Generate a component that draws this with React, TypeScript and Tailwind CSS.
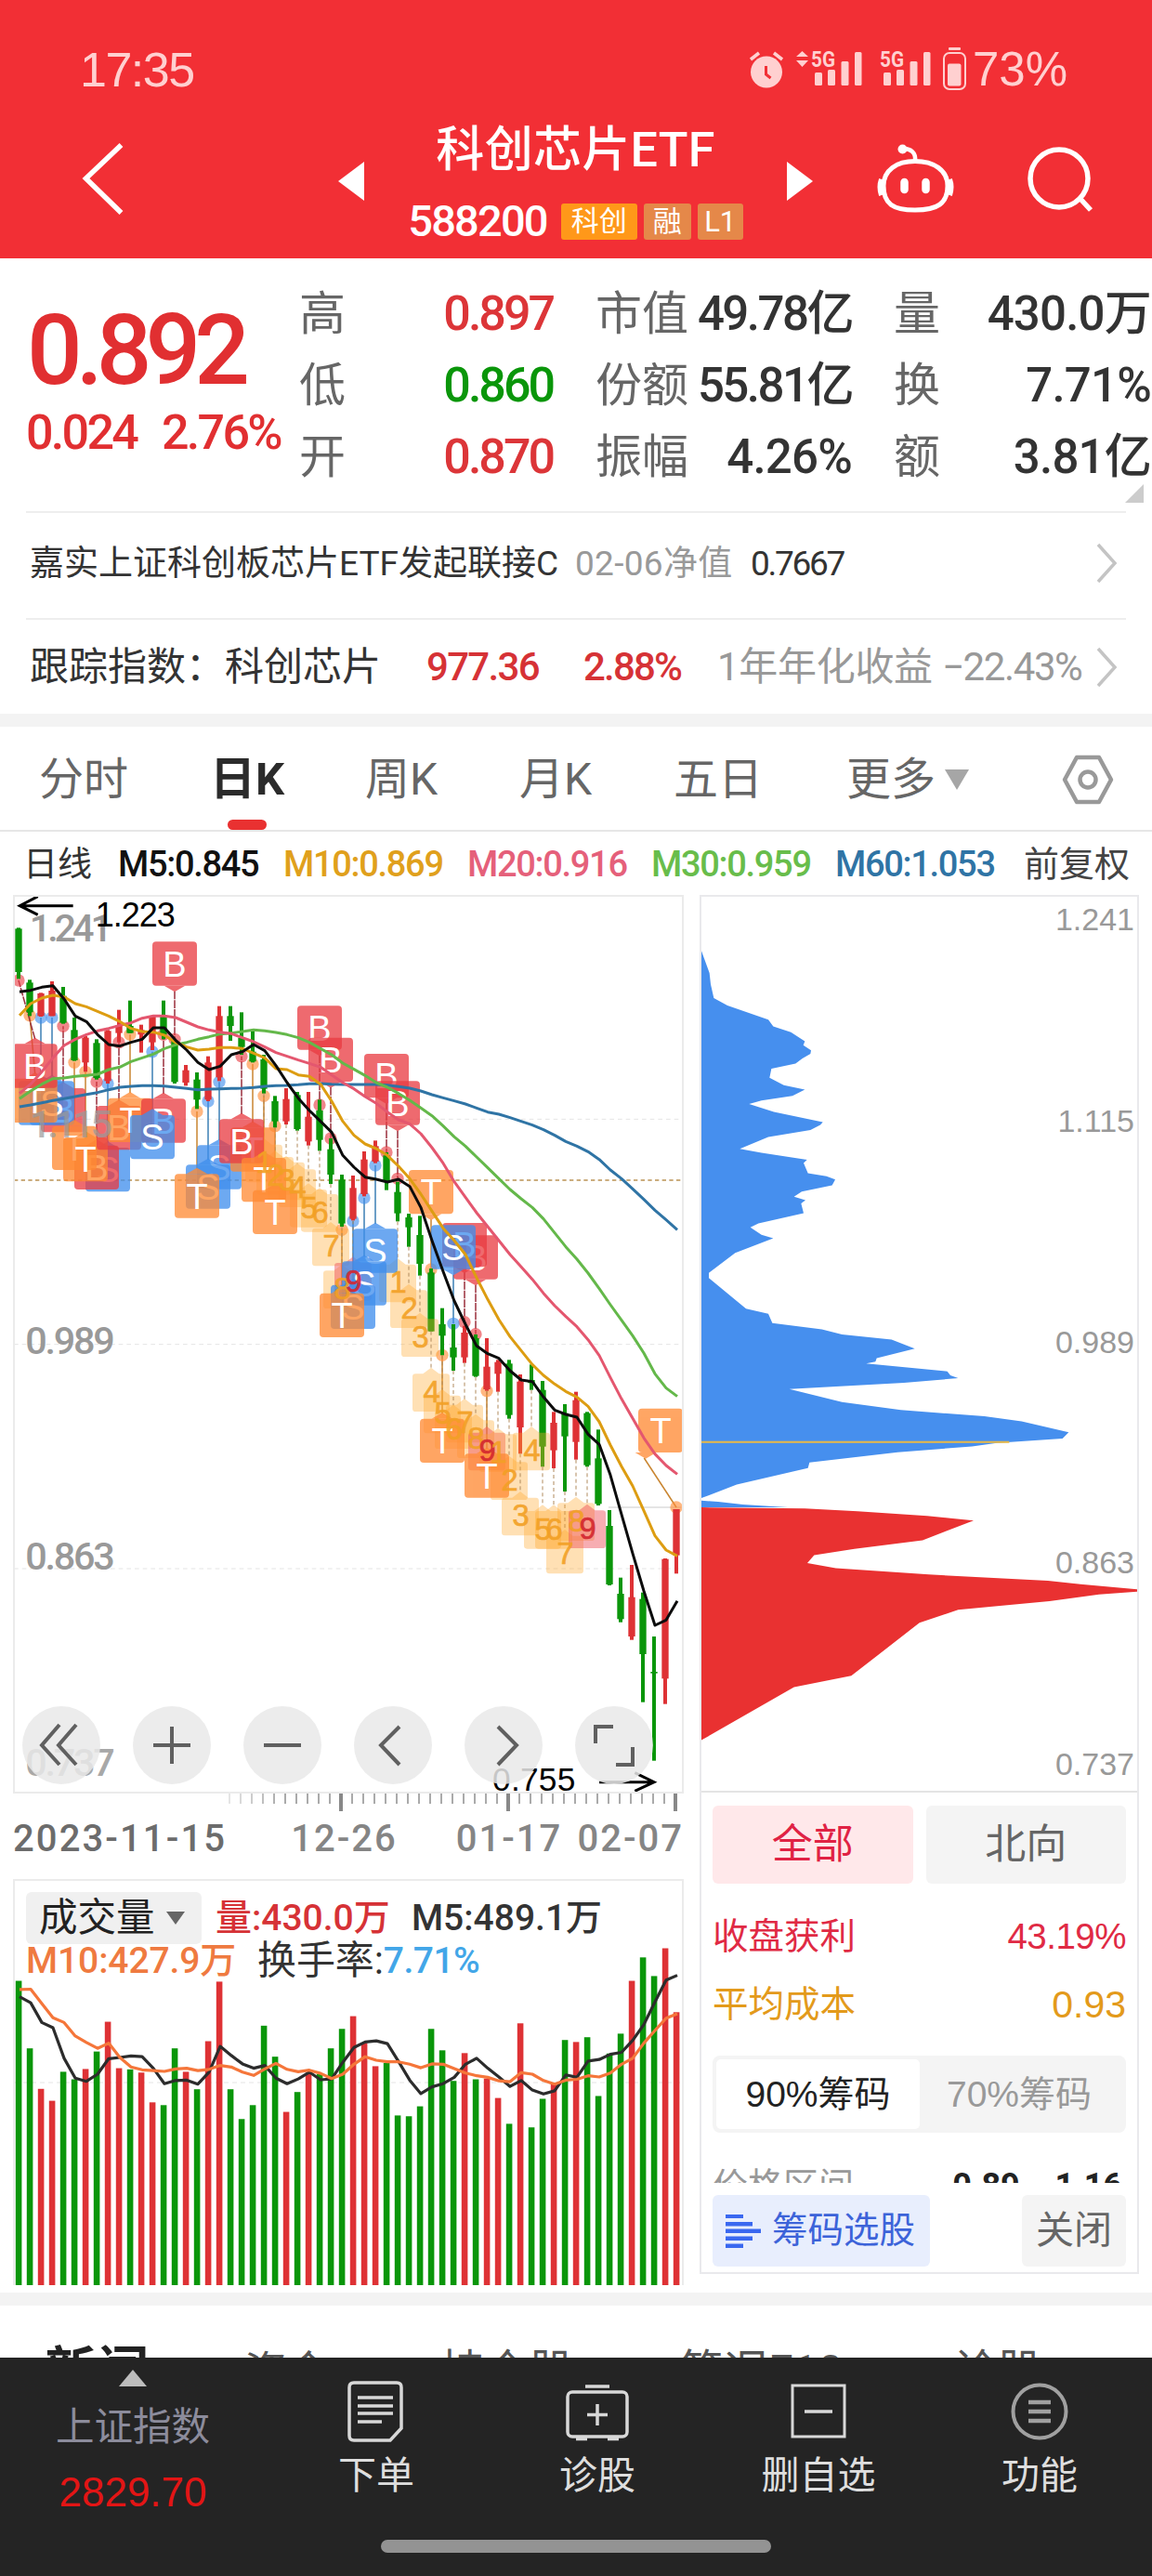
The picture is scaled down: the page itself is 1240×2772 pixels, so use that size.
import React from "react";

// Chart space: 3 units per pixel, candles are 36 units apart
const STEP = 36;
const FIRST_X = 60;
const cx = (i: number) => FIRST_X + i * STEP;

const UP = "#de3235";
const DOWN = "#0a960a";

type Candle = [string, number, number, number, number];

// direction, high, low, body top, body bottom
const candles: Candle[] = [
  ["d", 145, 310, 148, 288], ["d", 313, 430, 322, 418], ["u", 355, 432, 357, 430], ["u", 318, 430, 348, 430],
  ["d", 336, 455, 365, 452], ["d", 435, 575, 475, 573], ["u", 495, 610, 500, 580], ["d", 505, 635, 517, 630],
  ["u", 475, 648, 478, 640], ["u", 410, 515, 460, 485], ["d", 380, 485, 462, 485], ["u", 458, 548, 475, 490],
  ["u", 430, 540, 432, 515], ["d", 380, 505, 430, 490], ["d", 505, 648, 510, 643], ["u", 588, 655, 605, 645],
  ["d", 612, 730, 635, 700], ["u", 560, 705, 580, 700], ["u", 398, 640, 430, 628], ["d", 398, 510, 430, 462],
  ["d", 418, 555, 500, 530], ["d", 478, 580, 545, 577], ["d", 555, 680, 570, 665], ["d", 688, 790, 705, 770],
  ["u", 663, 780, 698, 770], ["d", 675, 800, 685, 795], ["u", 675, 848, 755, 835], ["d", 700, 865, 735, 830],
  ["d", 825, 972, 860, 942], ["d", 942, 1110, 958, 1100], ["u", 945, 1090, 985, 1085], ["u", 867, 1012, 893, 1005],
  ["u", 832, 905, 850, 900], ["d", 870, 992, 880, 965], ["d", 965, 1093, 998, 1067], ["d", 1068, 1175, 1080, 1112],
  ["d", 1075, 1268, 1137, 1230], ["d", 1245, 1448, 1258, 1448], ["d", 1373, 1525, 1425, 1462], ["d", 1425, 1575, 1500, 1532],
  ["u", 1430, 1550, 1452, 1532], ["d", 1458, 1595, 1470, 1592], ["u", 1470, 1640, 1562, 1635], ["u", 1540, 1643, 1547, 1585],
  ["d", 1540, 1730, 1552, 1718], ["u", 1587, 1843, 1610, 1758], ["d", 1555, 1637, 1605, 1615], ["d", 1608, 1885, 1637, 1820],
  ["u", 1708, 1890, 1743, 1832], ["d", 1683, 1965, 1712, 1787], ["u", 1643, 1862, 1670, 1805], ["d", 1708, 1885, 1712, 1880],
  ["d", 1765, 2010, 1858, 2005], ["d", 2025, 2268, 2076, 2265], ["d", 2243, 2387, 2295, 2377], ["u", 2202, 2444, 2306, 2433],
  ["d", 2291, 2645, 2312, 2490], ["d", 2433, 2834, 2547, 2552], ["u", 2181, 2651, 2183, 2569], ["u", 2022, 2230, 2022, 2171],
];

const averages = [
  { color: "#2f74a5", values: [723, 717, 710, 703, 697, 690, 683, 677, 668, 660, 657, 655, 655, 656, 660, 664, 668, 666, 665, 664, 663, 661, 657, 655, 654, 652, 649, 648, 650, 651, 651, 651, 651, 653, 658, 663, 672, 684, 694, 704, 714, 727, 740, 747, 758, 770, 782, 797, 815, 835, 850, 868, 893, 927, 955, 988, 1022, 1057, 1088, 1120] },
  { color: "#64b84a", values: [697, 672, 650, 632, 630, 625, 622, 618, 603, 595, 577, 565, 553, 535, 523, 515, 505, 497, 488, 485, 480, 475, 478, 483, 490, 500, 515, 535, 555, 582, 602, 622, 645, 660, 680, 702, 727, 752, 785, 820, 850, 885, 920, 955, 990, 1020, 1048, 1085, 1130, 1175, 1215, 1260, 1310, 1362, 1412, 1462, 1518, 1585, 1631, 1658] },
  { color: "#e4576f", values: [680, 650, 610, 565, 525, 505, 490, 478, 470, 460, 452, 437, 430, 430, 435, 450, 465, 475, 482, 487, 500, 513, 530, 548, 560, 572, 583, 595, 620, 645, 665, 690, 712, 740, 765, 778, 810, 855, 905, 965, 1015, 1065, 1110, 1155, 1200, 1240, 1280, 1325, 1365, 1400, 1433, 1475, 1526, 1597, 1666, 1729, 1792, 1844, 1881, 1909] },
  { color: "#dd9d12", values: [428, 390, 372, 363, 368, 390, 400, 415, 430, 448, 470, 480, 482, 492, 515, 530, 540, 537, 532, 532, 535, 550, 565, 600, 603, 620, 625, 650, 705, 770, 815, 843, 858, 880, 915, 955, 1005, 1060, 1115, 1155, 1200, 1275, 1345, 1410, 1465, 1510, 1555, 1590, 1618, 1642, 1660, 1690, 1740, 1815, 1884, 1947, 2027, 2108, 2154, 2173] },
  { color: "#0c0c0c", values: [352, 347, 337, 332, 375, 430, 448, 490, 522, 527, 515, 505, 468, 468, 508, 540, 580, 603, 592, 555, 545, 522, 542, 590, 645, 695, 735, 770, 805, 880, 918, 950, 957, 966, 957, 980, 1048, 1155, 1255, 1350, 1425, 1495, 1520, 1535, 1575, 1605, 1610, 1660, 1702, 1716, 1725, 1780, 1813, 1912, 2039, 2165, 2286, 2397, 2380, 2318] },
];

type Mark = { k: "B" | "S" | "T"; i: number; top: number; dot: number; x?: number; down?: boolean };

const marks: Mark[] = [
  { k: "S", i: 2, top: 640, dot: 435 },
  { k: "B", i: 4, top: 663, dot: 463 },
  { k: "S", i: 3, top: 640, dot: 435 },
  { k: "T", i: 1, top: 632, dot: 428, x: 113 },
  { k: "B", i: 0, top: 520, dot: 315, x: 113 },
  { k: "S", i: 8, top: 855, dot: 648 },
  { k: "B", i: 7, top: 848, dot: 642 },
  { k: "T", i: 5, top: 785, dot: 580 },
  { k: "T", i: 6, top: 822, dot: 610 },
  { k: "B", i: 9, top: 720, dot: 515 },
  { k: "T", i: 10, top: 695, dot: 490 },
  { k: "B", i: 13, top: 697, dot: 490 },
  { k: "S", i: 12, top: 750, dot: 545 },
  { k: "B", i: 14, top: 190, dot: 505, down: true },
  { k: "S", i: 18, top: 847, dot: 643 },
  { k: "S", i: 17, top: 910, dot: 705 },
  { k: "T", i: 16, top: 940, dot: 738 },
  { k: "T", i: 21, top: 790, dot: 585 },
  { k: "B", i: 20, top: 763, dot: 560 },
  { k: "T", i: 22, top: 888, dot: 688 },
  { k: "T", i: 23, top: 992, dot: 785 },
  { k: "B", i: 27, top: 397, dot: 717, down: true },
  { k: "B", i: 28, top: 500, dot: 825, down: true },
  { k: "B", i: 33, top: 552, dot: 870, down: true },
  { k: "B", i: 34, top: 640, dot: 955, down: true },
  { k: "S", i: 32, top: 1117, dot: 912 },
  { k: "S", i: 31, top: 1222, dot: 1017 },
  { k: "S", i: 30, top: 1298, dot: 1092 },
  { k: "T", i: 29, top: 1325, dot: 1120 },
  { k: "T", i: 37, top: 927, dot: 1248, down: true },
  { k: "B", i: 41, top: 1138, dot: 1457, down: true },
  { k: "B", i: 40, top: 1098, dot: 1418, down: true },
  { k: "S", i: 39, top: 1105, dot: 1423, down: true },
  { k: "T", i: 38, top: 1730, dot: 1525 },
  { k: "T", i: 42, top: 1843, dot: 1640 },
  { k: "T", i: 59, top: 1697, dot: 2016, x: 2133, down: true },
];

const MARK_FILL = { B: "#e93c42", S: "#3f8eed", T: "#ff8a33" };
const MARK_LINE = { B: "#9a2f3c", S: "#3b7fb4", T: "#c98530" };

// nine-turn counters: [candle, number, centre]
const counts: [number, number, number][] = [
  [22, 1, 905], [23, 2, 945], [24, 3, 962], [25, 4, 985], [26, 5, 1050], [27, 6, 1065], [28, 7, 1175], [29, 8, 1312], [30, 9, 1287],
  [34, 1, 1292], [35, 2, 1375], [36, 3, 1468], [37, 4, 1645], [38, 5, 1715], [39, 6, 1765], [40, 7, 1745], [41, 8, 1795], [42, 9, 1835],
  [43, 1, 1840], [44, 2, 1930], [45, 3, 2045], [46, 4, 1835], [47, 5, 2088], [48, 6, 2088], [49, 7, 2168], [50, 8, 2062], [51, 9, 2086],
];

const MarkLine = ({ m }: { m: Mark }) => {
  const x = m.x ?? cx(m.i);
  const last = m.i === 59;
  return (
    <g>
      <line x1={last ? 2080 : x} y1={m.down ? m.top + 160 : m.top - 16} x2={cx(m.i)} y2={m.dot} stroke={MARK_LINE[m.k]} strokeWidth="4.5" strokeDasharray={m.k === "B" ? "26 3" : undefined} />
      <circle cx={cx(m.i)} cy={m.dot} r="20" fill={MARK_FILL[m.k]} opacity="0.62" />
    </g>
  );
};

const MarkBox = ({ m }: { m: Mark }) => {
  const x = m.x ?? cx(m.i);
  const tipX = m.i === 59 ? 2085 : x;
  const tip = m.down
    ? `M${tipX - 34} ${m.top + 142} h68 l-34 20 z`
    : `M${tipX - 34} ${m.top} h68 l-34 -20 z`;
  return (
    <g>
      <g fill={MARK_FILL[m.k]} opacity="0.76">
        <rect x={x - 72} y={m.top} width="144" height="142" rx="12" />
        <path d={tip} />
      </g>
      <text x={x} y={m.top + 112} textAnchor="middle" fontSize="114" fill="#fff">{m.k}</text>
    </g>
  );
};

const polyline = (values: number[]) => values.map((v, i) => `${i ? "L" : "M"}${cx(i) + 3} ${v}`).join(" ");

function KLineChart() {
  return (
    <svg viewBox="48 45 2154 2889" className="block h-[963px] w-[718px]" fontFamily="Liberation Sans, Arial, sans-serif">
      {[763, 1490, 2214].map((y) => (
        <line key={y} x1="45" x2="2205" y1={y} y2={y} stroke="#e4e4e4" strokeWidth="3" strokeDasharray="14 12" />
      ))}
      <line x1="1965" x2="2200" y1="2016" y2="2016" stroke="#ddd" strokeWidth="4" />
      <line x1="45" x2="2205" y1="960" y2="960" stroke="#bb9254" strokeWidth="5" strokeDasharray="13 10" />

      {marks.map((m, i) => <MarkLine key={i} m={m} />)}

      {candles.map(([dir, high, low, top, bottom], i) => (
        <g key={i} fill={dir === "u" ? UP : DOWN}>
          <rect x={cx(i) - 6} y={high} width="12" height={low - high} />
          <rect x={cx(i) - 11} y={top} width="22" height={bottom - top} />
        </g>
      ))}

      {counts.map(([i, n, y]) => (
        <g key={i}>
          <line x1={cx(i)} x2={cx(i)} y1={candles[i][2]} y2={y - 78} stroke="#b08a5c" strokeWidth="3" strokeDasharray="12 9" />
          <path
            d={`M${cx(i) - 50} ${y - 60} h24 l26 -20 l26 20 h24 q10 0 10 10 v102 q0 10 -10 10 h-100 q-10 0 -10 -10 v-102 q0 -10 10 -10 z`}
            fill={n === 9 ? "#ee4a55" : "#ffa930"}
            opacity={n === 9 ? 0.45 : 0.36}
          />
        </g>
      ))}
      {marks.map((m, i) => <MarkBox key={i} m={m} />)}
      {counts.map(([i, n, y]) => (
        <text key={i} x={cx(i) + 2} y={y + 32} textAnchor="middle" fontSize="98" fill={n === 9 ? "#d3262f" : "#f2a025"} stroke={n === 9 ? "#d3262f" : "#f2a025"} strokeWidth="2" opacity="0.9">
          {n}
        </text>
      ))}

      <g fill="none" strokeWidth="9" strokeLinejoin="round">
        {averages.map((a) => <path key={a.color} d={polyline(a.values)} stroke={a.color} />)}
      </g>

      {/* axis labels */}
      <g fontFamily="Roboto, sans-serif" fontSize="124" fill="#999" fontWeight="500">
        <text x="95" y="188" textLength="268">1.241</text>
        <text x="95" y="822" textLength="268" opacity="0.7">1.115</text>
        <text x="82" y="1520" textLength="289">0.989</text>
        <text x="82" y="2218" textLength="289">0.863</text>
        <text x="82" y="2883" textLength="289" opacity="0.85">0.737</text>
      </g>

      {/* period high and low */}
      <g fill="none" stroke="#000" strokeWidth="9">
        <path d="M236 74 H64 M122 44 L64 74 L122 103" />
        <path d="M1935 2903 H2112 M2050 2873 L2112 2903 L2050 2932" />
      </g>
      <text x="308" y="142" fontSize="108" textLength="258">1.223</text>
      <text x="1590" y="2930" fontSize="106" textLength="268">0.755</text>
    </svg>
  );
}

const volumes: [string, number][] = [
  ["d", 775], ["d", 945], ["u", 1047], ["u", 1077], ["d", 1004], ["d", 1023], ["u", 997], ["d", 953], ["u", 878], ["u", 995],
  ["d", 998], ["u", 1006], ["u", 1081], ["d", 1088], ["d", 945], ["u", 1004], ["d", 1048], ["u", 927], ["u", 777], ["d", 1048],
  ["d", 1123], ["d", 1088], ["d", 888], ["d", 966], ["u", 1105], ["d", 1055], ["u", 1007], ["d", 1010], ["d", 945], ["d", 896],
  ["u", 864], ["u", 932], ["u", 990], ["d", 982], ["d", 1114], ["d", 1116], ["d", 1091], ["d", 896], ["d", 950], ["d", 1027],
  ["u", 957], ["d", 1023], ["u", 1021], ["u", 1070], ["d", 1135], ["u", 882], ["d", 1144], ["d", 1072], ["u", 1034], ["d", 924],
  ["u", 929], ["d", 917], ["d", 1065], ["d", 958], ["d", 908], ["u", 775], ["d", 716], ["d", 763], ["u", 693], ["u", 854],
];
const volumeM5 = [815, 830, 880, 893, 970, 1020, 1028, 1010, 971, 968, 964, 966, 995, 1034, 1026, 1025, 1035, 1005, 940, 963, 984, 995, 988, 1020, 1034, 1022, 1005, 1024, 1022, 980, 943, 929, 926, 933, 978, 1025, 1059, 1042, 1034, 1018, 985, 970, 995, 1017, 1041, 1026, 1050, 1060, 1052, 1012, 1018, 977, 973, 960, 955, 925, 885, 828, 773, 761];
const volumeM10 = [797, 796, 832, 868, 880, 914, 930, 945, 932, 968, 992, 999, 1001, 1003, 997, 995, 1001, 998, 988, 992, 1005, 1013, 997, 983, 998, 1004, 1000, 1008, 1021, 1010, 985, 966, 975, 979, 979, 985, 994, 984, 985, 996, 1007, 1014, 1018, 1027, 1029, 1006, 1010, 1026, 1035, 1025, 1023, 1014, 1017, 1007, 985, 970, 932, 900, 869, 858];

const volX = (i: number) => 4 + i * 12;
const volY = (v: number) => (v - 521) / 2.34 - 1;
const volPath = (values: number[]) => values.map((v, i) => `${i ? "L" : "M"}${volX(i) + 1} ${volY(v).toFixed(1)}`).join(" ");

function VolumeChart() {
  return (
    <svg viewBox="0 0 718 435" className="absolute inset-0 h-[435px] w-[718px]">
      <line x1="0" x2="718" y1="217" y2="217" stroke="#e4e4e4" strokeDasharray="5 4" />
      {volumes.map(([dir, v], i) => (
        <rect key={i} x={volX(i) - 3.2} y={volY(v)} width="6.6" height={435 - volY(v)} fill={dir === "u" ? UP : DOWN} />
      ))}
      <g fill="none" strokeWidth="3.2" strokeLinejoin="round">
        <path d={volPath(volumeM5)} stroke="#2c2c2c" />
        <path d={volPath(volumeM10)} stroke="#f5763a" />
      </g>
    </svg>
  );
}

function ChipChart() {
  return (
    <svg viewBox="46 24 1407 1571" preserveAspectRatio="none" className="block h-[962px] w-[469px]">
      <polygon
        fill="#468fee"
        points="40,110 72,158 76,178 86,202 130,215 262,240 278,252 335,262 380,278 375,285 400,294 398,300 372,308 350,317 272,326 266,342 312,355 380,363 340,374 240,382 200,388 280,402 438,420 430,425 398,434 262,446 170,467 240,474 387,486 376,492 390,510 450,515 478,521 468,531 370,542 345,551 382,557 368,563 376,580 230,598 204,605 240,618 278,624 155,650 70,685 70,694 190,748 262,757 275,773 435,784 500,793 660,802 735,818 612,835 608,841 578,844 840,858 850,865 875,870 700,878 330,889 500,912 690,926 960,937 1080,946 1232,965 1212,976 1000,984 920,990 680,1000 395,1018 390,1028 160,1057 40,1082"
      />
      <polygon fill="#468fee" points="40,1085 100,1087 180,1092 325,1097 40,1097" />
      <polygon
        fill="#e93131"
        points="40,1097 380,1099 550,1104 775,1112 850,1116 925,1120 760,1155 540,1170 410,1181 388,1195 480,1204 780,1215 1165,1226 1270,1232 1455,1241 1455,1245 1330,1250 1170,1262 970,1272 875,1277 750,1300 530,1393 345,1413 40,1508"
      />
      <rect x="40" y="980.5" width="1000" height="3.4" fill="#e5b84a" />
    </svg>
  );
}

const Chevron = () => (
  <svg viewBox="0 0 24 44" className="h-[44px] w-[24px] shrink-0" fill="none" stroke="#c4c4c4" strokeWidth="3.5">
    <path d="M3 2 L21 22 L3 42" />
  </svg>
);

const StatusIcons = () => (
  <svg viewBox="800 40 244 60" className="h-[60px] w-[244px]" fill="#ffd0d0">
    <circle cx="825" cy="77.500" r="17" />
    <path d="M808 64 l9 -7 M842 64 l-9 -7" stroke="#ffd0d0" strokeWidth="3.500" />
    <path d="M824.500 71 v9 l5 4" fill="none" stroke="#f22f35" strokeWidth="3" />
    <path d="M857 61 l6.500 -6 l6.500 6z M857 65 h13 l-6.500 7z" />
    {[0, 74].map((dx) => (
      <g key={dx} transform={`translate(${dx} 0)`}>
        <text x="873" y="72" fontFamily="Roboto, sans-serif" fontWeight="700" fontSize="24" textLength="26" lengthAdjust="spacingAndGlyphs">5G</text>
        <rect x="877" y="78" width="8" height="14" rx="1.500" />
        <rect x="891" y="75" width="8" height="17" rx="1.500" />
        <rect x="905.500" y="66" width="8" height="26" rx="1.500" />
        <rect x="920" y="56" width="7.500" height="36" rx="1.500" />
      </g>
    ))}
    <rect x="1021" y="51" width="13" height="3" rx="1" />
    <rect x="1016" y="57" width="23" height="39" rx="6" fill="none" stroke="#ffd0d0" strokeWidth="2" />
    <rect x="1020" y="68.500" width="14.500" height="24" rx="2" />
  </svg>
);

const Header = () => (
  <header className="h-[278px] bg-[#f22f35] text-white">
    <div className="flex h-[100px] items-end justify-between pr-[91px] pl-[86px] text-[#ffd0d0]">
      <span className="font-['Liberation_Sans',sans-serif] text-[52px] leading-[50px] tracking-[-1.5px]">17:35</span>
      <div className="flex items-end">
        <StatusIcons />
        <span className="pl-[3px] font-['Liberation_Sans',sans-serif] text-[51px] leading-[50px]">73%</span>
      </div>
    </div>
    <div className="flex h-[178px] pt-[31px]">
      <svg viewBox="86 150 50 84" className="mt-[19px] ml-[86px] h-[84px] w-[50px]" fill="none" stroke="#fff" strokeWidth="5.500">
        <path d="M130.500 156 L92.500 192 L130.500 229" />
      </svg>
      <svg viewBox="0 0 28 42" className="mt-[43px] ml-[228px] h-[42px] w-[28px]" fill="#fff"><path d="M28 0 V42 L0 21z" /></svg>
      <div className="flex w-[455px] flex-col items-center">
        <h1 className="text-[52px] leading-[62px] font-medium tracking-[0.3px]">科创芯片ETF</h1>
        <div className="mt-[24px] flex h-[42px] items-center gap-[7px]">
          <span className="mr-[8px] text-[47px] leading-[42px] font-medium tracking-[-1.8px]">588200</span>
          <span className="flex h-[39px] w-[82px] items-center justify-center rounded-[3px] bg-[#ff9819] text-[30px] leading-none">科创</span>
          <span className="flex h-[39px] w-[51px] items-center justify-center rounded-[3px] bg-[#e58849] text-[31px] leading-none">融</span>
          <span className="flex h-[39px] w-[49px] items-center justify-center rounded-[3px] bg-[#e58849] text-[31px] leading-none">L1</span>
        </div>
      </div>
      <svg viewBox="0 0 28 42" className="mt-[43px] h-[42px] w-[28px]" fill="#fff"><path d="M0 0 V42 L28 21z" /></svg>
      <svg viewBox="940 150 90 84" className="mt-[19px] ml-[65px] h-[84px] w-[90px]" fill="none" stroke="#fff" strokeWidth="5">
        <path d="M985 173.500 C1005 173.500 1020 183 1020 200 C1020 219 1009 226 985 226 C961 226 951 219 951 200 C951 183 965 173.500 985 173.500z" />
        <path d="M985 173 C986 164 980 160 973 160" strokeWidth="4.500" />
        <circle cx="971.500" cy="160.500" r="5" fill="#fff" stroke="none" />
        <path d="M949 193 q-3 8 0 17 M1022 193 q3 8 0 17" strokeWidth="6" />
        <path d="M973.500 196 v8 M996.500 196 v8" strokeWidth="8.500" strokeLinecap="round" />
      </svg>
      <svg viewBox="1100 150 80 84" className="mt-[19px] ml-[70px] h-[84px] w-[80px]" fill="none" stroke="#fff" strokeWidth="5.500">
        <circle cx="1140" cy="192" r="31" />
        <path d="M1162 213 L1174 226" />
      </svg>
    </div>
  </header>
);

const quoteRows = [
  { label: "高", value: "0.897", tone: "text-[#dc3538]", mid: "市值", midValue: "49.78亿", midTrack: "tracking-[-2.500px]", end: "量", endValue: "430.0万" },
  { label: "低", value: "0.860", tone: "text-[#0a960a]", mid: "份额", midValue: "55.81亿", midTrack: "tracking-[-2.500px]", end: "换", endValue: "7.71%" },
  { label: "开", value: "0.870", tone: "text-[#dc3538]", mid: "振幅", midValue: "4.26%", midTrack: "tracking-[-0.800px]", end: "额", endValue: "3.81亿" },
];

const Quote = () => (
  <section className="relative flex h-[272px] overflow-hidden bg-white">
    <div className="w-[322px] shrink-0 pt-[49px] text-[#e12f31]">
      <div className="pl-[29px] text-[105px] leading-[102px] font-medium tracking-[-7px]">0.892</div>
      <div className="flex gap-[29px] pt-[11px] pl-[28px] text-[52px] leading-[52px] font-medium tracking-[-2.700px]">
        <span className="w-[117px]">0.024</span>
        <span>2.76%</span>
      </div>
    </div>
    <div className="flex flex-col pt-[21px]">
      {quoteRows.map((row) => (
        <div key={row.label} className="flex h-[77px] items-center text-[50px] leading-none text-[#333]">
          <span className="w-[60px] text-[#666]">{row.label}</span>
          <span className={`w-[213px] text-right text-[52px] font-medium tracking-[-3px] ${row.tone}`}>{row.value}</span>
          <span className="ml-[46px] w-[100px] text-[#666]">{row.mid}</span>
          <span className={`w-[176px] text-right text-[51px] font-medium whitespace-nowrap ${row.midTrack}`}>{row.midValue}</span>
          <span className="ml-[45px] w-[52px] text-[#666]">{row.end}</span>
          <span className="w-[225px] text-right text-[51px] font-medium tracking-[-0.800px] whitespace-nowrap">{row.endValue}</span>
        </div>
      ))}
    </div>
    <svg viewBox="0 0 20 20" className="absolute right-[9px] bottom-[9px] size-[20px]" fill="#ccc"><path d="M20 0 V20 H0z" /></svg>
  </section>
);

const FundRows = () => (
  <section className="px-[28px]">
    <div className="flex h-[115px] items-center border-t-2 border-[#eee] pb-[5px] pl-[4px] text-[37px] leading-none text-[#333]">
      <span className="w-[587px] whitespace-nowrap">嘉实上证科创板芯片ETF发起联接C</span>
      <span className="w-[189px] tracking-[0.300px] text-[#999]">02-06净值</span>
      <span className="w-[371px] tracking-[-2.300px]">0.7667</span>
      <Chevron />
    </div>
    <div className="flex h-[103px] items-center border-t-2 border-[#eee] pl-[4px] text-[42px] leading-none text-[#333]">
      <span className="w-[427px] whitespace-nowrap">跟踪指数：科创芯片</span>
      <span className="w-[169px] font-medium tracking-[-1.700px] text-[#d63236]">977.36</span>
      <span className="w-[144px] font-medium tracking-[-1.800px] text-[#d63236]">2.88%</span>
      <span className="w-[242px] tracking-[-0.300px] whitespace-nowrap text-[#999]">1年年化收益</span>
      <span className="w-[165px] tracking-[-1.400px] whitespace-nowrap text-[#999]">−22.43%</span>
      <Chevron />
    </div>
  </section>
);

const Tabs = () => (
  <nav className="flex h-[113px] items-center border-b-2 border-[#e6e6e6] pt-[2px] pl-[42px] text-[48px] leading-none text-[#666]">
    <span className="w-[184px]">分时</span>
    <span className="relative flex h-full w-[167px] items-center text-[49px] font-bold text-[#2b2b2b]">
      日K
      <i className="absolute bottom-0 left-[19px] h-[11px] w-[42px] rounded-full bg-[#e93131]" />
    </span>
    <span className="w-[166px]">周K</span>
    <span className="w-[166px]">月K</span>
    <span className="w-[186px]">五日</span>
    <span className="w-[106px]">更多</span>
    <svg viewBox="0 0 26 22" className="h-[22px] w-[26px]" fill="#a6a6a6"><path d="M0 0 H26 L13 22z" /></svg>
    <svg viewBox="0 0 56 56" className="ml-[100px] size-[56px]" fill="none" stroke="#999" strokeWidth="4.500" strokeLinejoin="round">
      <path d="M16 4 H40 L53 28 L40 52 H16 L3 28z" />
      <circle cx="28" cy="28" r="8.500" />
    </svg>
  </nav>
);

const AverageRow = () => (
  <div className="flex h-[68px] items-center pt-[2px] pl-[25px] text-[38px] leading-none font-medium tracking-[-1.300px] whitespace-nowrap">
    <span className="w-[102px] text-[37px] font-normal tracking-normal text-[#333]">日线</span>
    <span className="w-[178px] text-[#111]">M5:0.845</span>
    <span className="w-[198px] text-[#e0a01c]">M10:0.869</span>
    <span className="w-[198px] text-[#e5607a]">M20:0.916</span>
    <span className="w-[198px] text-[#68bd4b]">M30:0.959</span>
    <span className="w-[203px] text-[#2f74a5]">M60:1.053</span>
    <span className="font-normal tracking-normal text-[#444]">前复权</span>
  </div>
);

const controls = [
  "M40 20 L21 42 L40 63 M58 20 L39 42 L58 63",
  "M42 22 V62 M22 42 H62",
  "M22 42 H62",
  "M49 22 L29 42 L49 63",
  "M36 22 L56 42 L36 63",
  "M22 40 V22 H41 M44 63 H62 V44",
];

const ticks = Array.from({ length: 41 }, (_, i) => 233 + i * 12);

const DateAxis = () => (
  <div className="flex h-[92px] flex-col">
    <svg viewBox="0 0 720 20" className="h-[20px] w-[720px] shrink-0">
      {ticks.map((x, i) => {
        const major = x === 353 || x === 533 || x === 713;
        return <rect key={x} x={x - (major ? 2 : 1)} y="0" width={major ? 4 : 2} height={major ? 19 : 11} fill={major ? "#888" : "#aaa"} opacity={Math.min(1, 0.3 + i * 0.15)} />;
      })}
    </svg>
    <div className="flex h-[57px] items-center text-[40px] leading-none font-medium whitespace-nowrap text-[#858585]">
      <span className="w-[300px] tracking-[2.100px] text-[#6c6c6c]">2023-11-15</span>
      <span className="w-[178px] tracking-[2px]">12-26</span>
      <span className="w-[131px] tracking-[2px]">01-17</span>
      <span className="tracking-[2px]">02-07</span>
    </div>
  </div>
);

const ChipPanel = () => (
  <aside className="flex h-[1484px] w-[473px] flex-col border-2 border-[#e9e9ec] font-['Liberation_Sans','Noto_Sans_CJK_SC',sans-serif]">
    <div className="relative h-[964px] border-b-2 border-[#e4e4e4]">
      <ChipChart />
      {/* price scale over the distribution */}
      <div className="absolute inset-y-0 right-[3px] text-right text-[34px] leading-[34px] text-[#999]">
        <div className="mt-[7px]">1.241</div>
        <div className="mt-[183px]">1.115</div>
        <div className="mt-[204px]">0.989</div>
        <div className="mt-[203px]">0.863</div>
        <div className="mt-[183px]">0.737</div>
      </div>
    </div>
    <div className="flex h-[515px] flex-col px-[12px] pt-[14px]">
      <div className="flex gap-[14px] text-[44px] leading-none">
        <span className="flex h-[84px] flex-1 items-center justify-center rounded-[6px] bg-[#ffe8ea] text-[#e02244]">全部</span>
        <span className="flex h-[84px] flex-1 items-center justify-center rounded-[6px] bg-[#f4f4f4] text-[#666]">北向</span>
      </div>
      <div className="mt-[34px] flex h-[46px] items-center justify-between text-[38.500px] leading-none text-[#e02a44]">
        <span>收盘获利</span><span className="tracking-[-0.500px]">43.19%</span>
      </div>
      <div className="mt-[27px] flex h-[46px] items-center justify-between text-[38.500px] leading-none text-[#e39a1b]">
        <span>平均成本</span><span className="text-[41px]">0.93</span>
      </div>
      <div className="mt-[32px] flex h-[83px] shrink-0 rounded-[8px] bg-[#f4f4f4] p-[4px] text-[39px] leading-none">
        <span className="flex w-[219px] items-center justify-center rounded-[5px] bg-white text-[#222]">90%筹码</span>
        <span className="flex flex-1 items-center justify-center pr-[4px] text-[#999]">70%筹码</span>
      </div>
      <div className="mt-[32px] flex h-[22px] shrink-0 items-start justify-between overflow-hidden pt-[2px] pr-[4px] text-[38px] leading-[46px]">
        <span className="text-[#999]">价格区间</span>
        <span className="font-['Roboto',sans-serif] text-[36px] font-bold text-[#222]">0.89 − 1.16</span>
      </div>
      <div className="mt-[13px] flex justify-between leading-none">
        <span className="flex h-[77px] w-[234px] items-center rounded-[6px] bg-[#e8eefd] pl-[14px] text-[38.500px] text-[#3c63d9]">
          <svg viewBox="0 0 38 36" className="mr-[12px] h-[36px] w-[38px]" fill="#3a68f0">
            <path d="M0 0h19v4H0z M0 8h29v4.500H0z M0 15.500h38v4.500H0z M0 23.500h29v4.500H0z M0 31.500h19v4.500H0z" />
          </svg>
          筹码选股
        </span>
        <span className="flex h-[77px] w-[112px] items-center justify-center rounded-[6px] bg-[#f4f4f4] text-[41px] text-[#666]">关闭</span>
      </div>
    </div>
  </aside>
);

const Charts = () => (
  <section className="flex h-[1504px] gap-[17px] pl-[14px]">
    <div className="w-[722px]">
      <div className="relative border-2 border-[#ebebeb]">
        <KLineChart />
        <div className="absolute bottom-[8px] left-[8px] flex gap-[35px]">
          {controls.map((d) => (
            <span key={d} className="size-[84px] rounded-full bg-[#e9e9e9]/85">
              <svg viewBox="0 0 84 84" fill="none" stroke="#606060" strokeWidth="4"><path d={d} /></svg>
            </span>
          ))}
        </div>
      </div>
      <DateAxis />
      <div className="relative h-[437px] border-2 border-b-0 border-[#ebebeb]">
        <VolumeChart />
        <div className="relative flex items-center pt-[12px] pl-[12px] text-[39px] leading-none font-medium whitespace-nowrap">
          <span className="mr-[15px] flex h-[56px] w-[189px] items-center gap-[12px] rounded-[6px] bg-[#f0f0f0] pl-[14px] text-[41.500px] font-normal text-[#222]">
            成交量
            <svg viewBox="0 0 20 14" className="h-[14px] w-[20px]" fill="#666"><path d="M0 0h20l-10 14z" /></svg>
          </span>
          <span className="w-[211px] text-[#d63236]">量:430.0万</span>
          <span className="text-[#333]">M5:489.1万</span>
        </div>
        <div className="relative flex h-[36px] items-center pl-[12px] text-[39px] leading-none font-medium tracking-[-0.100px] whitespace-nowrap">
          <span className="w-[249px] text-[#ef7a40]">M10:427.9万</span>
          <span className="text-[42px] font-normal text-[#333]">换手率:</span>
          <span className="tracking-[-0.500px] text-[#42a6e8]">7.71%</span>
        </div>
      </div>
    </div>
    <ChipPanel />
  </section>
);

const BottomTabs = () => (
  <div className="h-[56px] overflow-hidden text-[48px] text-[#555]">
    <div className="flex h-[120px] items-center pt-[22px] pl-[48px] leading-none whitespace-nowrap">
      <span className="w-[215px] text-[56px] font-bold text-[#222]">新闻</span>
      <span className="w-[211px] text-[46px]">资金</span>
      <span className="w-[257px]">持仓股</span>
      <span className="w-[295px]">简况F10</span>
      <span>诊股</span>
    </div>
  </div>
);

const NavItem = ({ label, children }: { label: string; children: React.ReactNode }) => (
  <div className="flex w-[238px] flex-col items-center pt-[22px]">
    <svg viewBox="0 0 72 72" className="size-[72px]" fill="none" stroke="#d8d8d8" strokeWidth="3.500">{children}</svg>
    <span className="mt-[12px] text-[41px] leading-[42px] text-[#dedede]">{label}</span>
  </div>
);

const BottomNav = () => (
  <footer className="h-[235px] bg-[#242424]">
    <div className="flex h-[196px]">
      <div className="flex w-[286px] flex-col items-center pt-[13px]">
        <svg viewBox="0 0 30 18" className="h-[18px] w-[30px]" fill="#bdbdbd"><path d="M0 18 L15 0 L30 18z" /></svg>
        <span className="mt-[23px] text-[41.500px] leading-[42px] text-[#8c8c9c]">上证指数</span>
        <span className="mt-[27px] font-['Liberation_Sans',sans-serif] text-[44px] leading-[44px] text-[#e31515]">2829.70</span>
      </div>
      <NavItem label="下单">
        <path d="M12 5 H58 Q63 5 63 10 V54 L51 67 H12 Q7 67 7 62 V10 Q7 5 12 5z" />
        <path d="M16 21 H54 M16 30 H54 M16 38 H54 M16 47 H42" />
      </NavItem>
      <NavItem label="诊股">
        <rect x="4" y="15" width="64" height="48" rx="5" />
        <path d="M23 9 H49 M36 28 V51 M25 39.500 H47 M13 65.500 H25 M47 65.500 H59" />
      </NavItem>
      <NavItem label="删自选">
        <rect x="8" y="8" width="56" height="55" strokeWidth="3" />
        <path d="M21 36 H51" />
      </NavItem>
      <NavItem label="功能">
        <g stroke="#a0a0a0" strokeWidth="4">
          <circle cx="36" cy="36" r="28.500" />
          <path d="M24 26 H48 M24 36 H48 M24 46 H48" strokeWidth="4.500" />
        </g>
      </NavItem>
    </div>
    <div className="mx-auto h-[14px] w-[420px] rounded-full bg-[#939393]" />
  </footer>
);

export default function App() {
  return (
    <div className="h-[2772px] w-[1240px] overflow-hidden bg-white font-['Roboto','Noto_Sans_CJK_SC',sans-serif]">
      <Header />
      <Quote />
      <FundRows />
      <div className="h-[14px] bg-[#f3f3f3]" />
      <Tabs />
      <AverageRow />
      <Charts />
      <div className="h-[14px] bg-[#f3f3f3]" />
      <BottomTabs />
      <BottomNav />
    </div>
  );
}
